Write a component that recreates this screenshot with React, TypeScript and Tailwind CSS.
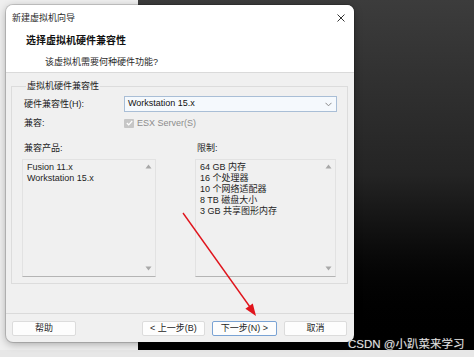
import React from 'react';

const ff = "[font-family:'Liberation_Sans','Noto_Sans_CJK_SC',sans-serif]";

function UpArrow() {
  return (
    <svg width="7" height="5" viewBox="0 0 7 5">
      <path d="M3.5 0.5 L6.5 4.5 L0.5 4.5 Z" fill="#a8a8a8" />
    </svg>
  );
}

function DownArrow() {
  return (
    <svg width="7" height="5" viewBox="0 0 7 5">
      <path d="M0.5 0.5 L6.5 0.5 L3.5 4.5 Z" fill="#a8a8a8" />
    </svg>
  );
}

function ListBox({ items, width }: { items: string[]; width: string }) {
  return (
    <div className={`flex h-[118px] ${width} border border-[#e2e2e2] border-b-[#b4b4b4]`}>
      <div className="flex-1 pl-[4px] pt-[2px] text-[9px] leading-[11px] text-[#1e1e1e]">
        {items.map((t) => (
          <div key={t} className="whitespace-nowrap">{t}</div>
        ))}
      </div>
      <div className="flex w-[14px] flex-col items-center justify-between pt-[4px] pb-[5px]">
        <UpArrow />
        <DownArrow />
      </div>
    </div>
  );
}

function Btn({ children, w, primary }: { children: React.ReactNode; w: string; primary?: boolean }) {
  return (
    <div
      className={`flex h-[15px] ${w} items-center justify-center rounded-[2px] bg-[#fdfdfd] text-[9px] text-[#1e1e1e] ${
        primary ? 'border border-[#7aa3d4]' : 'border border-[#dcdcdc]'
      }`}
    >
      {children}
    </div>
  );
}

export default function App() {
  return (
    <div className={`relative h-[357px] w-[474px] overflow-hidden bg-[#e7e7e7] ${ff}`}>
      {/* desktop behind the dialog */}
      <div className="flex h-[350px]">
        <div className="w-[138px] bg-[#efefef]" />
        <div className="flex-1 bg-gradient-to-b from-[#3c3c3c] via-[#242424] via-50% to-black" />
      </div>

      {/* wizard dialog */}
      <div className="absolute left-[6px] top-[5px] flex h-[337px] w-[348px] flex-col overflow-hidden rounded-[7px] bg-[#f0f0f0] shadow-[0_2px_8px_rgba(0,0,0,0.3)] ring-1 ring-black/15">
        <div className="h-[68px] border-b border-[#dadada] bg-white">
          <div className="flex h-[25px] items-center justify-between pl-[6px] pr-[9px]">
            <span className="text-[9px] leading-[12px] text-[#2a2a2a]">新建虚拟机向导</span>
            <svg width="8" height="8" viewBox="0 0 8 8">
              <path d="M0.5 0.5 L7.5 7.5 M7.5 0.5 L0.5 7.5" stroke="#333" strokeWidth="1" />
            </svg>
          </div>
          <div className="mt-[5px] pl-[20px] text-[10px] font-bold leading-[12px] text-[#111]">选择虚拟机硬件兼容性</div>
          <div className="mt-[9px] pl-[39px] text-[9px] leading-[12px] text-[#2a2a2a]">该虚拟机需要何种硬件功能?</div>
        </div>

        <fieldset className="ml-[5px] mr-[6px] mt-[7px] h-[204px] border border-[#dcdcdc] pl-[10px] pr-[10px]">
          <legend className="ml-[4px] px-[1px] text-[9px] leading-[12px] text-[#1e1e1e]">虚拟机硬件兼容性</legend>

          <div className="mt-[4px] flex items-center">
            <span className="ml-[2px] w-[100px] text-[9px] leading-[12px] text-[#1e1e1e]">硬件兼容性(H):</span>
            <div className="flex h-[16px] flex-1 items-center justify-between border border-[#a9bed6] bg-[#f5f9fd] pl-[3px] pr-[4px]">
              <span className="text-[9px] text-[#111]">Workstation 15.x</span>
              <svg width="7" height="5" viewBox="0 0 7 5">
                <path d="M0.5 0.8 L3.5 3.8 L6.5 0.8" fill="none" stroke="#8a8a8a" strokeWidth="1" />
              </svg>
            </div>
          </div>

          <div className="mt-[5px] flex items-center">
            <span className="ml-[2px] w-[100px] text-[9px] leading-[12px] text-[#1e1e1e]">兼容:</span>
            <div className="flex h-[9px] w-[10px] items-center justify-center rounded-[1px] bg-[#c6c6c6]">
              <svg width="7" height="6" viewBox="0 0 7 6">
                <path d="M0.8 3 L2.7 4.8 L6.2 1" fill="none" stroke="#fff" strokeWidth="1.2" />
              </svg>
            </div>
            <span className="ml-[3px] text-[9px] leading-[12px] text-[#8c8c8c]">ESX Server(S)</span>
          </div>

          <div className="mt-[13px] flex text-[9px] leading-[12px] text-[#1e1e1e]">
            <span className="ml-[2px] w-[173px]">兼容产品:</span>
            <span>限制:</span>
          </div>

          <div className="mt-[5px] flex gap-[39px]">
            <ListBox width="w-[134px]" items={['Fusion 11.x', 'Workstation 15.x']} />
            <ListBox
              width="w-[141px]"
              items={['64 GB 内存', '16 个处理器', '10 个网络适配器', '8 TB 磁盘大小', '3 GB 共享图形内存']}
            />
          </div>
        </fieldset>

        <div className="mt-auto flex items-center border-t border-[#dadada] pb-[6px] pl-[6px] pr-[7px] pt-[7px]">
          <Btn w="w-[64px]">帮助</Btn>
          <div className="flex-1" />
          <div className="flex gap-[7px]">
            <Btn w="w-[63px]">&lt; 上一步(B)</Btn>
            <Btn w="w-[65px]" primary>
              下一步(N) &gt;
            </Btn>
            <Btn w="w-[63px]">取消</Btn>
          </div>
        </div>
      </div>

      {/* red annotation arrow */}
      <svg className="pointer-events-none absolute inset-0" width="474" height="357" viewBox="0 0 474 357">
        <line x1="183" y1="213" x2="250" y2="307" stroke="#e0141c" strokeWidth="1.4" />
        <polygon points="256,316 245.4,308.8 252.8,303.6" fill="#e0141c" />
      </svg>

      {/* watermark */}
      <div className="absolute left-[348px] top-[337px] whitespace-nowrap text-[11.5px] leading-[14px] text-[#e2e2e2] [text-shadow:0_0_1px_#444]">
        CSDN @小趴菜来学习
      </div>
    </div>
  );
}
